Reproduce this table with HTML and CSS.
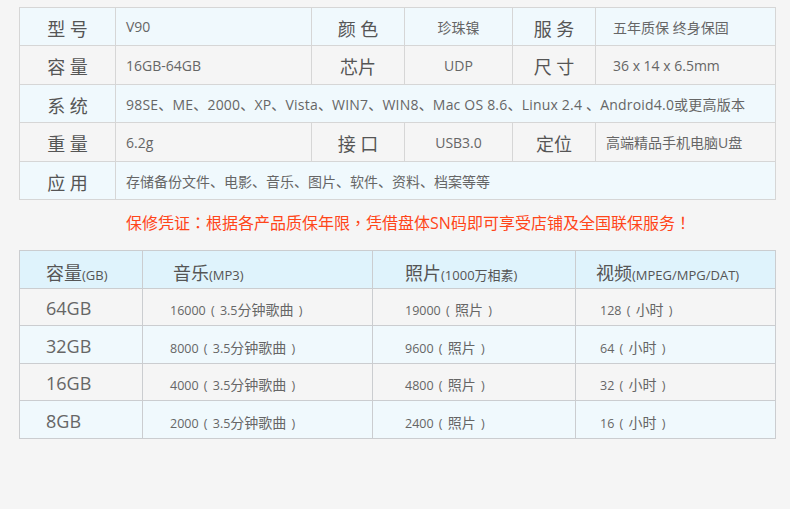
FILE: index.html
```html
<!DOCTYPE html>
<html lang="zh-CN">
<head>
<meta charset="utf-8">
<title>V90 参数</title>
<link rel="stylesheet" href="styles.css">
</head>
<body>
<div class="page">
  <table class="spec">
    <colgroup>
      <col class="c1"><col class="c2"><col class="c3"><col class="c4"><col class="c5"><col class="c6">
    </colgroup>
    <tr class="blue h38">
      <th>型 号</th><td>V90</td><th>颜 色</th><td class="center">珍珠镍</td><th>服 务</th><td class="pad18">五年质保 终身保固</td>
    </tr>
    <tr class="gray h39">
      <th>容 量</th><td>16GB-64GB</td><th>芯片</th><td class="center">UDP</td><th>尺 寸</th><td class="pad18">36 x 14 x 6.5mm</td>
    </tr>
    <tr class="blue h38">
      <th>系 统</th><td colspan="5" class="wide">98SE、ME、2000、XP、Vista、WIN7、WIN8、Mac OS 8.6、Linux 2.4 、Android4.0或更高版本</td>
    </tr>
    <tr class="gray h39">
      <th>重 量</th><td>6.2g</td><th>接 口</th><td class="center">USB3.0</td><th>定位</th><td>高端精品手机电脑U盘</td>
    </tr>
    <tr class="blue h38">
      <th>应 用</th><td colspan="5">存储备份文件、电影、音乐、图片、软件、资料、档案等等</td>
    </tr>
  </table>

  <p class="notice">保修凭证<span class="tw" lang="zh-TW">：</span>根据各产品质保年限<span class="tw" lang="zh-TW">，</span>凭借盘体SN码即可享受店铺及全国联保服务<span class="tw" lang="zh-TW">！</span></p>

  <table class="cap">
    <colgroup>
      <col class="k1"><col class="k2"><col class="k3"><col class="k4">
    </colgroup>
    <tr class="head">
      <th class="p1">容量<small>(GB)</small></th>
      <th class="p2h">音乐<small>(MP3)</small></th>
      <th class="p3">照片<small>(1000万相素)</small></th>
      <th class="p4">视频<small>(MPEG/MPG/DAT)</small></th>
    </tr>
    <tr class="gray r37">
      <td class="size p1">64GB</td>
      <td class="p2">16000 ( 3.5<span class="zh">分钟歌曲</span> )</td>
      <td class="p3">19000 ( <span class="zh">照片</span> )</td>
      <td class="p4b">128 ( <span class="zh">小时</span> )</td>
    </tr>
    <tr class="blue r38">
      <td class="size p1">32GB</td>
      <td class="p2">8000 ( 3.5<span class="zh">分钟歌曲</span> )</td>
      <td class="p3">9600 ( <span class="zh">照片</span> )</td>
      <td class="p4b">64 ( <span class="zh">小时</span> )</td>
    </tr>
    <tr class="gray r37">
      <td class="size p1">16GB</td>
      <td class="p2">4000 ( 3.5<span class="zh">分钟歌曲</span> )</td>
      <td class="p3">4800 ( <span class="zh">照片</span> )</td>
      <td class="p4b">32 ( <span class="zh">小时</span> )</td>
    </tr>
    <tr class="blue r38">
      <td class="size p1">8GB</td>
      <td class="p2">2000 ( 3.5<span class="zh">分钟歌曲</span> )</td>
      <td class="p3">2400 ( <span class="zh">照片</span> )</td>
      <td class="p4b">16 ( <span class="zh">小时</span> )</td>
    </tr>
  </table>
</div>
</body>
</html>
```

FILE: styles.css
```css
html, body {
  margin: 0;
  padding: 0;
  background: #f5f5f5;
}

body {
  font-family: "Open Sans", "Noto Sans CJK SC", sans-serif;
  color: #666;
}

.page {
  width: 790px;
  height: 509px;
  padding: 7px 0 0 19px;
  box-sizing: border-box;
}

table {
  border-collapse: collapse;
  table-layout: fixed;
}

.spec {
  width: 756px;
}

.spec .c1 { width: 96px; }
.spec .c2 { width: 196px; }
.spec .c3 { width: 93px; }
.spec .c4 { width: 108px; }
.spec .c5 { width: 83px; }
.spec .c6 { width: 180px; }

.spec th,
.spec td {
  border: 1px solid #d6d6d6;
  padding: 0;
  vertical-align: middle;
  white-space: nowrap;
}

.spec th {
  font-weight: normal;
  font-size: 18px;
  color: #555;
  text-align: center;
  padding-top: 2px;
}

.spec td {
  font-size: 14px;
  color: #666;
  padding-left: 10px;
}

.spec td.center {
  text-align: center;
  padding-left: 0;
}

.spec td.pad18 {
  padding-left: 17px;
}

.spec td.wide {
  letter-spacing: 0.2px;
}

.h38 { height: 38px; }
.h39 { height: 39px; }

.blue { background: #f0f9fd; }
.gray { background: #f5f5f5; }

.notice {
  margin: 0;
  height: 50px;
  box-sizing: border-box;
  padding: 12px 0 0 107px;
  line-height: 20px;
  font-size: 16px;
  color: #ff4519;
}

.notice .tw {
  font-family: "Noto Sans CJK TC", sans-serif;
}

.cap {
  width: 756px;
}

.cap .k1 { width: 123px; }
.cap .k2 { width: 230px; }
.cap .k3 { width: 203px; }
.cap .k4 { width: 200px; }

.cap th,
.cap td {
  border: 1px solid #cbcdd0;
  padding: 0;
  text-align: left;
  vertical-align: middle;
  white-space: nowrap;
}

.cap .head {
  height: 38px;
  background: #dff3fc;
}

.cap th {
  font-weight: normal;
  font-size: 18px;
  color: #555;
  padding-top: 4px;
}

.cap th small {
  font-size: 13px;
}

.cap td {
  font-size: 12.5px;
  color: #666;
  padding-top: 4px;
  word-spacing: 2px;
}

.cap td .zh {
  font-size: 14px;
}

.cap td.size {
  font-size: 18px;
  padding-top: 2px;
  word-spacing: 0;
}

.cap .p1 { padding-left: 26px; }
.cap .p2h { padding-left: 30px; }
.cap .p2 { padding-left: 27px; }
.cap .p3 { padding-left: 32px; }
.cap .p4 { padding-left: 20px; }
.cap .p4b { padding-left: 24px; }

.r37 { height: 37px; }
.r38 { height: 38px; }
```
